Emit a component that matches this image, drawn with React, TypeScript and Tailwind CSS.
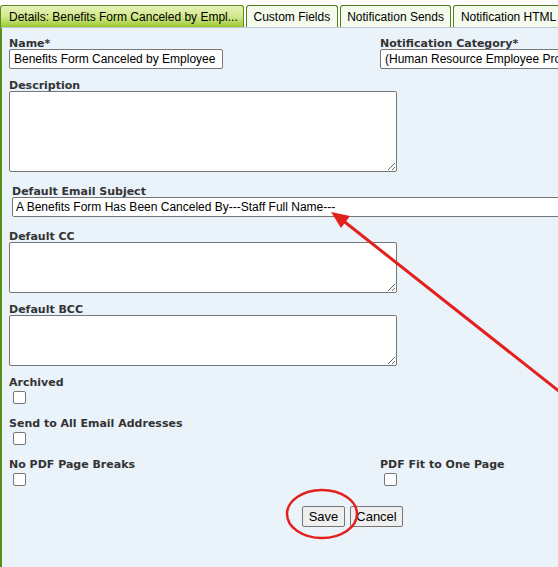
import React from "react";

const labelCls = "block pt-[2px] text-[11px] leading-[11px] font-bold text-[#333] [font-family:'DejaVu_Sans',Verdana,sans-serif]";
const fieldCls = "block bg-white border border-[#767676] rounded-[2px] text-[12px] text-black [font-family:'Liberation_Sans',Arial,sans-serif]";
const btnCls = "h-[21px] flex items-center justify-center bg-[#efefef] border border-[#767676] rounded-[2px] text-[13px] text-black";

function Checkbox() {
  return <input type="checkbox" className="block appearance-none w-[13px] h-[13px] mt-[3px] ml-[4px] bg-white border border-[#767676] rounded-[2px]" />;
}

export default function App() {
  const tabs = ["Custom Fields", "Notification Sends", "Notification HTML Preview"];

  return (
    <div className="relative w-[558px] h-[567px] overflow-hidden bg-white flex flex-col [font-family:'Liberation_Sans',Arial,sans-serif]">
      {/* tab strip */}
      <div className="flex gap-[2px] pt-[5px] whitespace-nowrap">
        <div className="shrink-0 w-[244px] h-[22px] px-[8px] flex items-center text-[12px] text-black border border-[#5b8a1f] border-b-0 rounded-t-[3px] bg-gradient-to-b from-[#e6f2b8] via-[#d2e88c] to-[#9cc924]">
          Details: Benefits Form Canceled by Empl...
        </div>
        {tabs.map((t) => (
          <div key={t} className="shrink-0 h-[22px] px-[6.5px] flex items-center text-[12px] text-black border border-[#4f7d1c] border-b-0 rounded-t-[3px] bg-[#f4faec]">
            {t}
          </div>
        ))}
      </div>

      {/* form panel */}
      <div className="flex-1 bg-[#eaf2fa] border-l-2 border-l-[#5a8f17] border-t border-t-[#b8c8d6] pl-[7px] pt-[8px]">
        <div className="grid grid-cols-[371px_1fr]">
          <div>
            <label className={labelCls}>Name*</label>
            <input className={`${fieldCls} w-[214px] h-[20px] px-[4px]`} defaultValue="Benefits Form Canceled by Employee" />
          </div>
          <div>
            <label className={labelCls}>Notification Category*</label>
            <div className={`${fieldCls} w-[260px] h-[20px] px-[4px] leading-[18px] whitespace-nowrap`}>
              (Human Resource Employee Profile)
            </div>
          </div>
        </div>

        <div className="mt-[9px]">
          <label className={labelCls}>Description</label>
          <textarea className={`${fieldCls} w-[388px] h-[81px]`} />
        </div>

        <div className="mt-[12px] ml-[3px]">
          <label className={labelCls}>Default Email Subject</label>
          <input className={`${fieldCls} w-[620px] h-[20px] px-[3px]`} defaultValue="A Benefits Form Has Been Canceled By---Staff Full Name---" />
        </div>

        <div className="mt-[12px]">
          <label className={labelCls}>Default CC</label>
          <textarea className={`${fieldCls} w-[388px] h-[51px]`} />
        </div>

        <div className="mt-[9px]">
          <label className={labelCls}>Default BCC</label>
          <textarea className={`${fieldCls} w-[388px] h-[51px]`} />
        </div>

        <div className="mt-[9px]">
          <label className={labelCls}>Archived</label>
          <Checkbox />
        </div>

        <div className="mt-[12px]">
          <label className={labelCls}>Send to All Email Addresses</label>
          <Checkbox />
        </div>

        <div className="mt-[12px] grid grid-cols-[371px_1fr]">
          <div>
            <label className={labelCls}>No PDF Page Breaks</label>
            <Checkbox />
          </div>
          <div>
            <label className={labelCls}>PDF Fit to One Page</label>
            <Checkbox />
          </div>
        </div>

        <div className="mt-[20px] pl-[293px] flex gap-[5px]">
          <button className={`${btnCls} w-[43px]`}>Save</button>
          <button className={`${btnCls} w-[53px]`}>Cancel</button>
        </div>
      </div>

      {/* red annotations */}
      <svg className="absolute inset-0 pointer-events-none" width="558" height="567" viewBox="0 0 558 567">
        <line x1="560" y1="392" x2="341" y2="219" stroke="#e3201d" strokeWidth="3" />
        <polygon points="331,212 350,216 341,228" fill="#e3201d" />
        <ellipse cx="322" cy="514" rx="35" ry="24" fill="none" stroke="#e3201d" strokeWidth="2.5" />
      </svg>
    </div>
  );
}
